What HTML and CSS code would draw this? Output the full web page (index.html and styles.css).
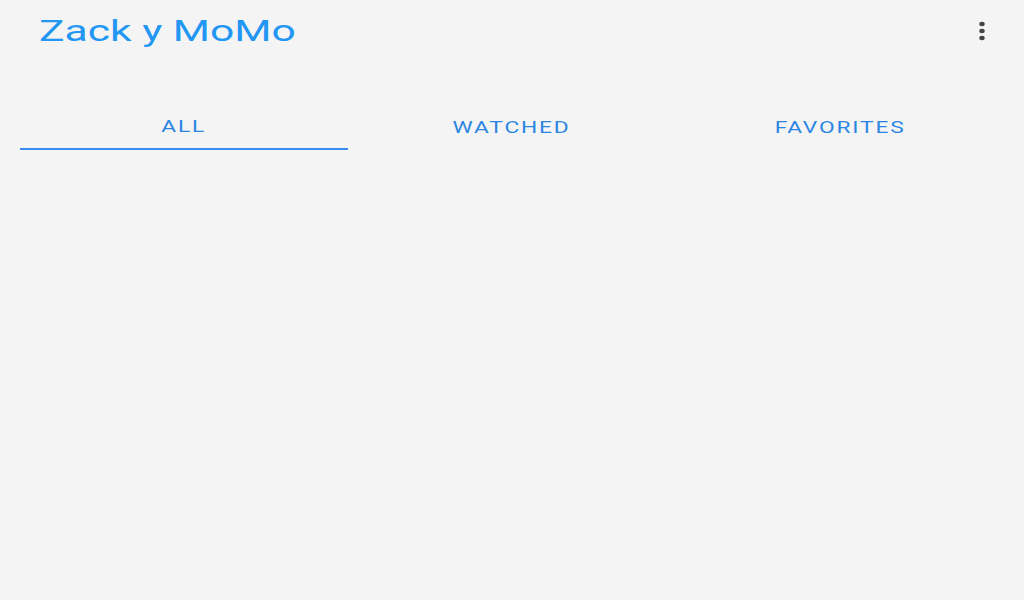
FILE: index.html
```html
<!DOCTYPE html>
<html lang="en">
<head>
<meta charset="utf-8">
<title>Zack y MoMo</title>
<link rel="stylesheet" href="styles.css">
</head>
<body>
<div class="app">
  <header class="appbar">
    <h1 class="title"><span class="stretch stretch-left">Zack y MoMo</span></h1>
    <button class="menu" aria-label="More options">
      <svg width="24" height="24" viewBox="0 0 24 24"><ellipse cx="12" cy="5" rx="2.7" ry="2.2"/><ellipse cx="12" cy="12" rx="2.7" ry="2.2"/><ellipse cx="12" cy="19" rx="2.7" ry="2.2"/></svg>
    </button>
  </header>
  <nav class="tabs">
    <div class="tab active"><span class="stretch">ALL</span></div>
    <div class="tab"><span class="stretch">WATCHED</span></div>
    <div class="tab"><span class="stretch">FAVORITES</span></div>
  </nav>
</div>
</body>
</html>
```
FILE: styles.css
```css
html, body {
  margin: 0;
  padding: 0;
  height: 100%;
}
body {
  background: #f4f4f4;
  font-family: Roboto, "Liberation Sans", sans-serif;
}
.app {
  height: 600px;
  overflow: hidden;
}
.appbar {
  display: flex;
  align-items: flex-start;
  justify-content: space-between;
  padding: 16px 30px 0 39px;
  height: 86px;
}
.title {
  margin: 0;
  font-size: 30px;
  line-height: 30px;
  font-weight: 400;
  color: #2196f3;
}
.stretch {
  display: inline-block;
  transform: scaleX(1.42);
  transform-origin: center;
}
.stretch-left {
  transform-origin: left center;
}
.menu {
  margin: 3px 0 0 0;
  padding: 0;
  border: 0;
  background: none;
  width: 24px;
  height: 24px;
  display: flex;
}
.menu svg {
  fill: #444444;
}
.tabs {
  display: flex;
  margin: 0 20px;
}
.tab {
  flex: 1;
  height: 48px;
  display: flex;
  align-items: center;
  justify-content: center;
  font-size: 16px;
  font-weight: 400;
  letter-spacing: 1.3px;
  color: #2b86e3;
  box-sizing: border-box;
  padding-top: 2px;
}
.tab.active {
  border-bottom: 2px solid #3a8cf0;
}
```
